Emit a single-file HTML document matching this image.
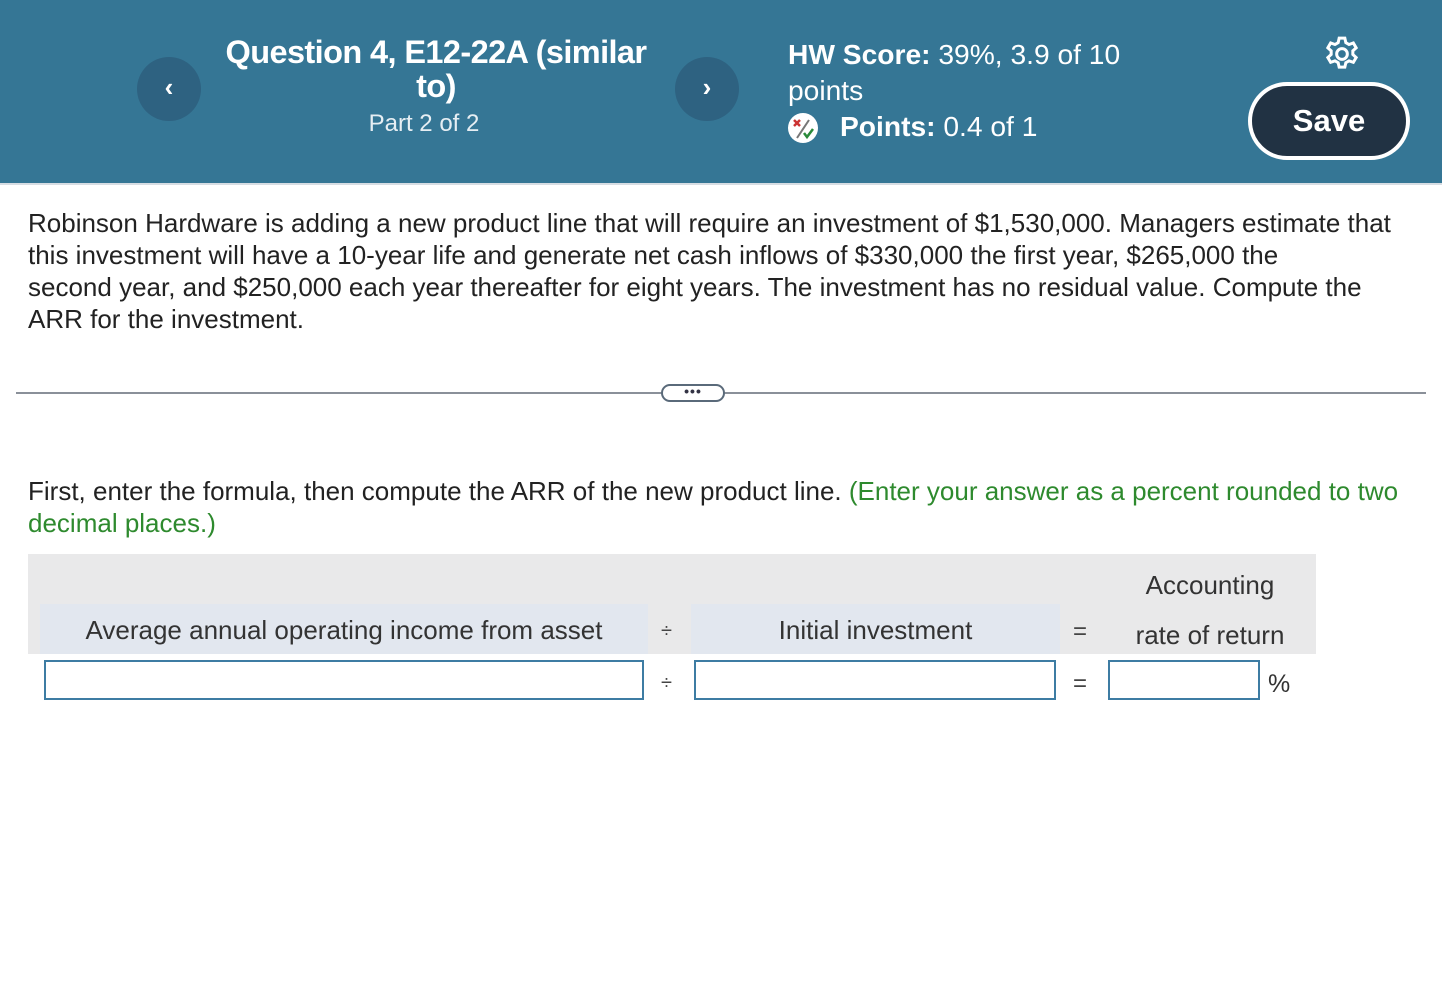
<!DOCTYPE html>
<html><head><meta charset="utf-8"><style>
*{margin:0;padding:0;box-sizing:border-box}
body{width:1442px;height:1002px;background:#fff;font-family:"Liberation Sans",Arial,sans-serif;color:#222;position:relative;overflow:hidden}
.hdr{position:absolute;left:0;top:0;width:1442px;height:185px;background:#357695;border-bottom:2px solid #d7dde3}
.abs{position:absolute}
.circ{width:64px;height:64px;border-radius:50%;background:#2e6281;color:#fff;font-size:26px;text-align:center;line-height:60px;font-weight:bold}
.w{color:#fff}
.t{font-size:26px;line-height:32px;white-space:nowrap}
</style></head><body>
<div class="hdr">
 <div class="abs circ" style="left:137px;top:57px">‹</div>
 <div class="abs circ" style="left:675px;top:57px">›</div>
 <div class="abs w" style="left:196px;top:35px;width:480px;text-align:center;font-size:32.5px;font-weight:bold;line-height:34px;letter-spacing:-0.6px">Question 4, E12-22A (similar<br>to)</div>
 <div class="abs" style="left:210px;top:110px;width:428px;text-align:center;font-size:24px;color:#e6eef3">Part 2 of 2</div>
 <div class="abs w" style="left:788px;top:36px;font-size:28.2px;line-height:36px;width:400px">
 <b>HW Score:</b> 39%, 3.9 of 10<br>points</div>
 <svg class="abs" style="left:787px;top:112px" width="32" height="32" viewBox="0 0 32 32"><circle cx="16" cy="16" r="15" fill="#fff"/><path d="M7 8l6 6M13 8l-6 6" stroke="#c33" stroke-width="2.5"/><path d="M10 26L22 8" stroke="#777" stroke-width="2"/><path d="M17 21l3 4 6-8" stroke="#2a8a3a" stroke-width="2.5" fill="none"/></svg>
 <div class="abs w" style="left:840px;top:108px;font-size:28.2px;line-height:36px"><b>Points:</b> 0.4 of 1</div>
 <svg class="abs" style="left:1322px;top:34px" width="40" height="40" viewBox="0 0 24 24" fill="none" stroke="#fff" stroke-width="1.8"><circle cx="12" cy="12" r="3.2"/><path d="M10.3 2.5h3.4l.6 2.7 1.9 1.1 2.6-.9 1.7 2.9-2 1.8v2.2l2 1.8-1.7 2.9-2.6-.9-1.9 1.1-.6 2.7h-3.4l-.6-2.7-1.9-1.1-2.6.9-1.7-2.9 2-1.8v-2.2l-2-1.8 1.7-2.9 2.6.9 1.9-1.1z"/></svg>
 <div class="abs" style="left:1248px;top:82px;width:162px;height:78px;border:4px solid #fff;border-radius:40px;background:#213243;color:#fff;font-weight:bold;font-size:31px;text-align:center;line-height:70px">Save</div>
</div>
<div class="abs t" style="left:28px;top:207px">Robinson Hardware is adding a new product line that will require an investment of $1,530,000. Managers estimate that<br>this investment will have a 10-year life and generate net cash inflows of $330,000 the first year, $265,000 the<br>second year, and $250,000 each year thereafter for eight years. The investment has no residual value. Compute the<br>ARR for the investment.</div>
<div class="abs" style="left:16px;top:392px;width:1410px;height:2px;background:#8a9099"></div>
<div class="abs" style="left:661px;top:384px;width:64px;height:18px;border:2px solid #5a6a7a;border-radius:9px;background:#fff;text-align:center;font-size:14px;line-height:10px;color:#334;font-weight:bold;letter-spacing:1px">•••</div>
<div class="abs t" style="left:28px;top:475px">First, enter the formula, then compute the ARR of the new product line. <span style="color:#2e8a2e">(Enter your answer as a percent rounded to two<br>decimal places.)</span></div>
<div class="abs" style="left:28px;top:554px;width:1288px;height:100px;background:#e9e9ea"></div>
<div class="abs" style="left:40px;top:604px;width:608px;height:50px;background:#e2e7ef;font-size:26px;text-align:center;line-height:52px;color:#333;white-space:nowrap">Average annual operating income from asset</div>
<div class="abs" style="left:691px;top:604px;width:369px;height:50px;background:#e2e7ef;font-size:26px;text-align:center;line-height:52px;color:#333">Initial investment</div>
<div class="abs" style="left:661px;top:620px;font-size:20px;color:#444">÷</div>
<div class="abs" style="left:1073px;top:618px;font-size:24px;color:#444">=</div>
<div class="abs" style="left:1110px;top:560px;width:200px;text-align:center;font-size:26px;line-height:50px;color:#333">Accounting<br>rate of return</div>
<div class="abs" style="left:44px;top:660px;width:600px;height:40px;border:2px solid #3d7ca3"></div>
<div class="abs" style="left:694px;top:660px;width:362px;height:40px;border:2px solid #3d7ca3"></div>
<div class="abs" style="left:1108px;top:660px;width:152px;height:40px;border:2px solid #3d7ca3"></div>
<div class="abs" style="left:661px;top:672px;font-size:20px;color:#444">÷</div>
<div class="abs" style="left:1073px;top:670px;font-size:24px;color:#444">=</div>
<div class="abs" style="left:1268px;top:670px;font-size:25px;color:#333">%</div>
</body></html>
